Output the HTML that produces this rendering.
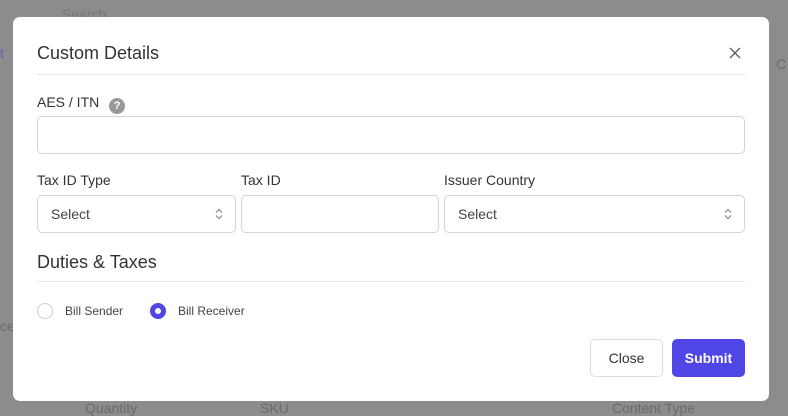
<!DOCTYPE html>
<html><head><style>
*{box-sizing:border-box;margin:0;padding:0}
body{width:788px;height:415px;background:#8c8c8c;font-family:"Liberation Sans",sans-serif;position:relative;overflow:hidden;color:#333}
.bg{position:absolute;color:#6a6a6a;font-size:14px}
.m{position:absolute;left:13px;top:17px;width:756px;height:384px;background:#fff;border-radius:7px}
.a{position:absolute}
.inp{position:absolute;border:1px solid #d4d4d8;border-radius:5px;background:#fff;font-size:14px;color:#444;padding-left:13px;line-height:36px}
.lbl{position:absolute;font-size:14px;color:#333}
.hr{position:absolute;left:24px;width:708px;height:1px;background:#e5e5e5}
.chev{position:absolute;right:12px;top:12px;width:8px;height:12px}
</style></head><body>
<div class="bg" style="left:62px;top:6px;color:#777">Search</div>
<div class="bg" style="left:0;top:45px;color:#66a">t</div>
<div class="bg" style="left:0;top:318px">ce</div>
<div class="bg" style="left:85px;top:400px">Quantity</div>
<div class="bg" style="left:260px;top:400px">SKU</div>
<div class="bg" style="left:612px;top:400px">Content Type</div>
<div class="bg" style="left:776px;top:56px">C</div>
<div class="m">
 <div class="a" style="left:24px;top:26px;font-size:18px;color:#333">Custom Details</div>
 <svg class="a" style="left:716px;top:30px" width="12" height="12" viewBox="0 0 12 12"><path d="M1 1L11 11M11 1L1 11" stroke="#666" stroke-width="1.5"/></svg>
 <div class="hr" style="top:57px"></div>
 <div class="lbl" style="left:24px;top:77px">AES / ITN <span style="display:inline-block;width:16px;height:16px;border-radius:50%;background:#999;color:#fff;font-size:11px;text-align:center;line-height:16px;font-weight:bold;margin-left:6px;vertical-align:-2px">?</span></div>
 <div class="inp" style="left:24px;top:99px;width:708px;height:38px"></div>
 <div class="lbl" style="left:24px;top:155px">Tax ID Type</div>
 <div class="lbl" style="left:228px;top:155px">Tax ID</div>
 <div class="lbl" style="left:431px;top:155px">Issuer Country</div>
 <div class="inp" style="left:24px;top:178px;width:199px;height:38px">Select<svg class="chev" viewBox="0 0 8 12"><path d="M1 4.5L4 1.5L7 4.5M1 7.5L4 10.5L7 7.5" fill="none" stroke="#888" stroke-width="1.2"/></svg></div>
 <div class="inp" style="left:228px;top:178px;width:198px;height:38px"></div>
 <div class="inp" style="left:431px;top:178px;width:301px;height:38px">Select<svg class="chev" viewBox="0 0 8 12"><path d="M1 4.5L4 1.5L7 4.5M1 7.5L4 10.5L7 7.5" fill="none" stroke="#888" stroke-width="1.2"/></svg></div>
 <div class="a" style="left:24px;top:235px;font-size:18px;color:#333">Duties &amp; Taxes</div>
 <div class="hr" style="top:264px"></div>
 <div class="a" style="left:24px;top:286px;width:16px;height:16px;border-radius:50%;border:1px solid #ccc"></div>
 <div class="a" style="left:52px;top:287px;font-size:12px;color:#444">Bill Sender</div>
 <div class="a" style="left:137px;top:286px;width:16px;height:16px;border-radius:50%;border:5px solid #4f46e5;background:#fff"></div>
 <div class="a" style="left:165px;top:287px;font-size:12px;color:#444">Bill Receiver</div>
 <div class="a" style="left:577px;top:322px;width:73px;height:38px;border:1px solid #ddd;border-radius:5px;font-size:14px;text-align:center;line-height:36px;color:#333">Close</div>
 <div class="a" style="left:659px;top:322px;width:73px;height:38px;background:#4f46e5;border-radius:5px;font-size:14px;text-align:center;line-height:38px;color:#fff;font-weight:bold">Submit</div>
</div>
</body></html>
